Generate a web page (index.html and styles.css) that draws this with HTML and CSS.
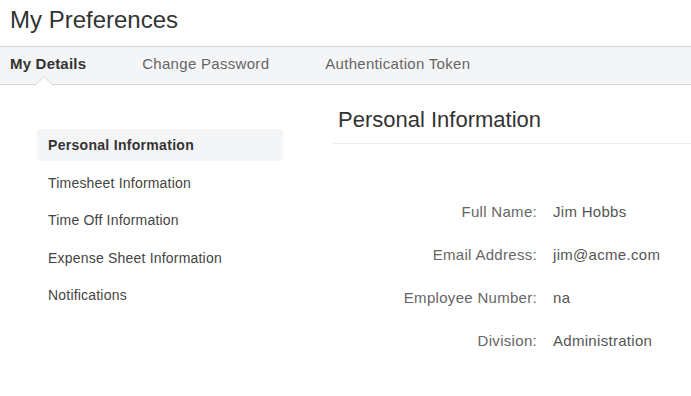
FILE: index.html
```html
<!DOCTYPE html>
<html>
<head>
<meta charset="utf-8">
<title>My Preferences</title>
<link rel="stylesheet" href="styles.css">
</head>
<body>
<header class="page-header">
  <h1 class="page-title">My Preferences</h1>
</header>
<nav class="tabs">
  <a class="tab tab-active">My Details</a>
  <a class="tab">Change Password</a>
  <a class="tab">Authentication Token</a>
</nav>
<div class="content">
  <aside class="sidebar">
    <a class="side-item side-active">Personal Information</a>
    <a class="side-item">Timesheet Information</a>
    <a class="side-item">Time Off Information</a>
    <a class="side-item">Expense Sheet Information</a>
    <a class="side-item">Notifications</a>
  </aside>
  <main class="main">
    <h2 class="section-title">Personal Information</h2>
    <dl class="fields">
      <dt class="label">Full Name:</dt><dd class="value">Jim Hobbs</dd>
      <dt class="label">Email Address:</dt><dd class="value">jim@acme.com</dd>
      <dt class="label">Employee Number:</dt><dd class="value">na</dd>
      <dt class="label">Division:</dt><dd class="value">Administration</dd>
    </dl>
  </main>
</div>
</body>
</html>
```
FILE: styles.css
```css
html, body {
  margin: 0;
  padding: 0;
  background: #fff;
}
body {
  font-family: "Liberation Sans", Arial, sans-serif;
  color: #333;
}
.page-header {
  padding: 6px 10px 12px;
}
.page-title {
  margin: 0;
  font-size: 24px;
  line-height: 28px;
  font-weight: normal;
  color: #333;
}
.tabs {
  display: flex;
  gap: 56px;
  padding: 0 10px;
  background: #f4f5f7;
  border-top: 1px solid #d6d6d6;
  border-bottom: 1px solid #d6d6d6;
}
.tab {
  position: relative;
  font-size: 15px;
  line-height: 17px;
  letter-spacing: 0.3px;
  padding: 8px 0 12px;
  color: #666;
  text-decoration: none;
}
.tab-active {
  font-weight: bold;
  color: #333;
  letter-spacing: 0.2px;
}
.tab-active::before,
.tab-active::after {
  content: "";
  position: absolute;
  bottom: -1px;
  width: 0;
  height: 0;
  border-style: solid;
  border-color: transparent;
}
.tab-active::before {
  left: 25px;
  border-width: 0 9px 9px 9px;
  border-bottom-color: #d6d6d6;
}
.tab-active::after {
  left: 26px;
  border-width: 0 8px 8px 8px;
  border-bottom-color: #fff;
}
.content {
  display: flex;
  padding-left: 37px;
}
.sidebar {
  width: 246px;
  flex: none;
  margin-top: 44px;
  display: flex;
  flex-direction: column;
  gap: 5.5px;
}
.side-item {
  display: block;
  height: 32px;
  line-height: 33px;
  padding-left: 11px;
  font-size: 14px;
  letter-spacing: 0.2px;
  color: #444;
  border-radius: 3px;
}
.side-active {
  background: #f4f5f7;
  font-weight: bold;
  letter-spacing: 0.3px;
  color: #333;
}
.main {
  flex: 1;
  margin-left: 50px;
}
.section-title {
  margin: 0;
  padding: 22px 0 10px 5px;
  font-size: 22px;
  line-height: 26px;
  font-weight: normal;
  color: #333;
  border-bottom: 1px solid #ececec;
}
.fields {
  display: grid;
  grid-template-columns: 204px 1fr;
  column-gap: 16px;
  row-gap: 26px;
  margin: 59px 0 0;
  font-size: 15px;
  line-height: 17px;
  letter-spacing: 0.3px;
}
.label {
  text-align: right;
  color: #666;
}
.value {
  margin: 0;
  color: #555;
}
```
